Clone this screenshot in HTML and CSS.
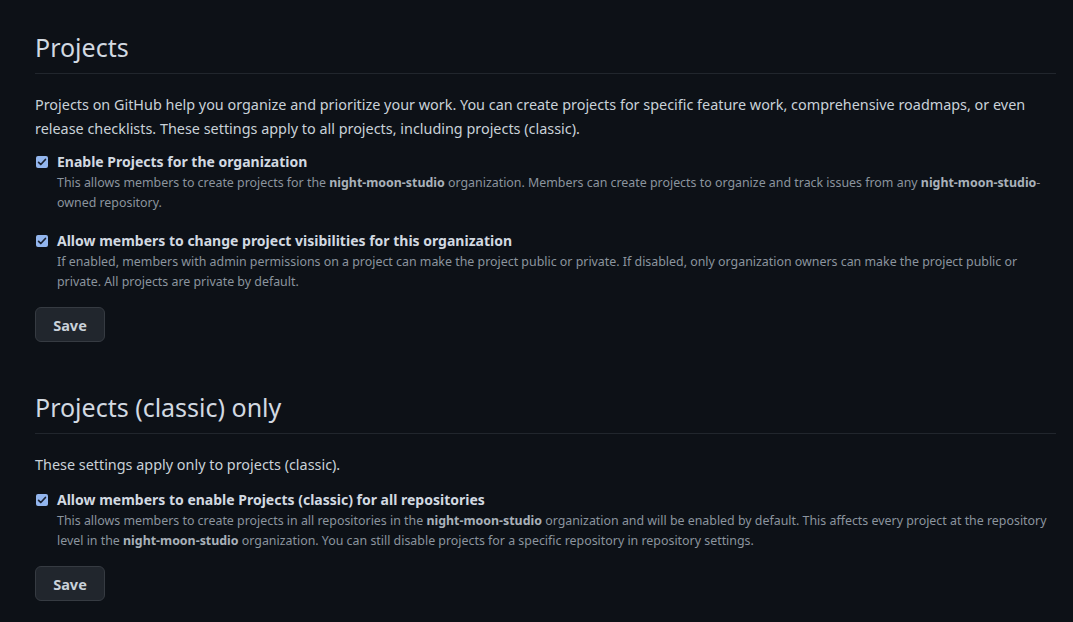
FILE: index.html
```html
<!DOCTYPE html>
<html lang="en">
<head>
<meta charset="utf-8">
<title>Projects settings</title>
<link rel="stylesheet" href="styles.css">
</head>
<body>
<main class="page">
  <section class="section">
    <h2 class="section-head">Projects</h2>
    <p class="intro">Projects on GitHub help you organize and prioritize your work. You can create projects for specific feature work, comprehensive roadmaps, or even release checklists. These settings apply to all projects, including projects (classic).</p>
    <div class="check-item">
      <span class="box"><svg viewBox="0 0 12 12" width="12" height="12"><path d="M2.6 6.3l2.2 2.2 4.6-5" fill="none" stroke="#1b2230" stroke-width="1.7" stroke-linecap="round" stroke-linejoin="round"/></svg></span>
      <div class="check-body">
        <div class="check-label">Enable Projects for the organization</div>
        <p class="note">This allows members to create projects for the <strong>night-moon-studio</strong> organization. Members can create projects to organize and track issues from any <strong>night-moon-studio</strong>-owned repository.</p>
      </div>
    </div>
    <div class="check-item">
      <span class="box"><svg viewBox="0 0 12 12" width="12" height="12"><path d="M2.6 6.3l2.2 2.2 4.6-5" fill="none" stroke="#1b2230" stroke-width="1.7" stroke-linecap="round" stroke-linejoin="round"/></svg></span>
      <div class="check-body">
        <div class="check-label">Allow members to change project visibilities for this organization</div>
        <p class="note">If enabled, members with admin permissions on a project can make the project public or private. If disabled, only organization owners can make the project public or private. All projects are private by default.</p>
      </div>
    </div>
    <button class="btn" type="button">Save</button>
  </section>
  <section class="section second">
    <h2 class="section-head">Projects (classic) only</h2>
    <p class="intro short">These settings apply only to projects (classic).</p>
    <div class="check-item">
      <span class="box"><svg viewBox="0 0 12 12" width="12" height="12"><path d="M2.6 6.3l2.2 2.2 4.6-5" fill="none" stroke="#1b2230" stroke-width="1.7" stroke-linecap="round" stroke-linejoin="round"/></svg></span>
      <div class="check-body">
        <div class="check-label">Allow members to enable Projects (classic) for all repositories</div>
        <p class="note">This allows members to create projects in all repositories in the <strong>night-moon-studio</strong> organization and will be enabled by default. This affects every project at the repository level in the <strong>night-moon-studio</strong> organization. You can still disable projects for a specific repository in repository settings.</p>
      </div>
    </div>
    <button class="btn" type="button">Save</button>
  </section>
</main>
</body>
</html>
```
FILE: styles.css
```css
html, body {
  margin: 0;
  padding: 0;
  background: #0d1117;
}
body {
  font-family: "Noto Sans", "Open Sans", sans-serif;
  color: #c9d1d9;
}
.page {
  padding: 30px 17px 0 35px;
}
.section {
  display: flex;
  flex-direction: column;
  align-items: flex-start;
}
.section.second {
  margin-top: 48px;
}
.section-head {
  align-self: stretch;
  margin: 0;
  font-size: 25px;
  font-weight: 400;
  line-height: 34px;
  padding-bottom: 9px;
  border-bottom: 1px solid #21262d;
  color: #d2d9e1;
}
.intro {
  margin: 19px 0 10px;
  font-size: 14.4px;
  line-height: 24px;
}
.intro.short {
  margin-bottom: 12px;
}
.check-item {
  display: flex;
  gap: 9px;
  margin-bottom: 17px;
}
.box {
  flex: none;
  width: 12px;
  height: 12px;
  margin-top: 5px;
  margin-left: 1px;
  background: #93b6ee;
  border-radius: 2px;
  display: flex;
}
.check-body {
  display: flex;
  flex-direction: column;
}
.check-label {
  font-size: 14px;
  font-weight: 700;
  line-height: 22px;
  color: #d2d9e1;
}
.note {
  margin: 0;
  font-size: 12.4px;
  line-height: 20px;
  color: #8b949e;
}
.note strong {
  color: #a9b1ba;
  font-weight: 700;
}
.btn {
  margin-top: -2px;
  width: 70px;
  height: 35px;
  border-radius: 6px;
  background: #21262d;
  border: 1px solid #363b42;
  color: #c9d1d9;
  font-family: inherit;
  font-size: 14.5px;
  font-weight: 700;
  padding: 0;
}
```
